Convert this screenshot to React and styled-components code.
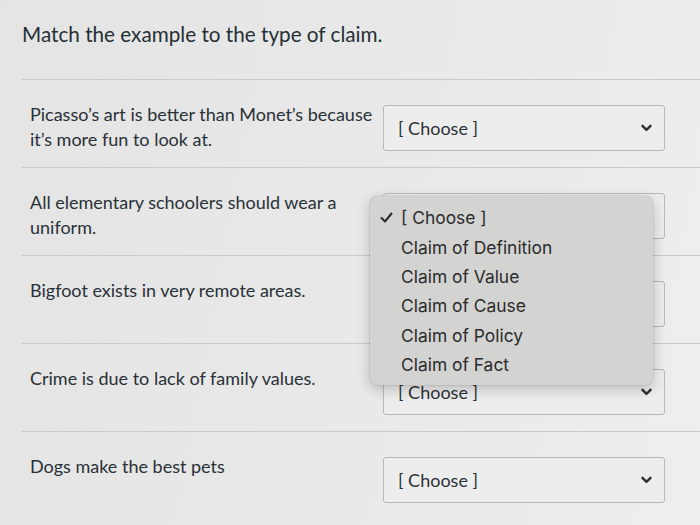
import React from "react";
import styled, { createGlobalStyle } from "styled-components";

const GlobalStyle = createGlobalStyle`
  html, body {
    margin: 0;
    padding: 0;
    background: #e6e7e6;
  }
  body {
    font-family: Lato, "Liberation Sans", sans-serif;
    color: #2d3b45;
  }
`;

const Page = styled.div`
  width: 700px;
  height: 525px;
  overflow: hidden;
  background: linear-gradient(100deg, #e3e4e3 0%, #e8e9e8 55%, #eeeeee 100%);
  padding-left: 22px;
  box-sizing: border-box;
`;

const Header = styled.header`
  height: 80px;
  box-sizing: border-box;
  padding-top: 20px;
  border-bottom: 1px solid #c9cac9;
`;

const Title = styled.h1`
  margin: 0;
  font-size: 20.7px;
  font-weight: 400;
  line-height: 28px;
  color: #262f36;
`;

const Row = styled.div`
  height: 88px;
  box-sizing: border-box;
  padding: 22px 0 0 8px;
  display: flex;
  align-items: flex-start;
  border-bottom: 1px solid ${({ last }) => (last ? "transparent" : "#c9cac9")};
`;

const Prompt = styled.div`
  width: 353px;
  padding-right: 6px;
  box-sizing: border-box;
  font-size: 18px;
  line-height: 25px;
  color: #2a3137;
`;

const SelectWrap = styled.div`
  position: relative;
  margin-top: 3px;
`;

const SelectBox = styled.div`
  width: 282px;
  height: 46px;
  box-sizing: border-box;
  border: 1px solid #b9bab9;
  border-radius: 3px;
  background: #ededed;
  display: flex;
  align-items: center;
  justify-content: space-between;
  padding: 0 12px 0 14px;
  font-size: 18px;
  color: #2a3137;
`;

const Chevron = styled.svg`
  width: 11px;
  height: 8px;
  flex: none;
`;

const Menu = styled.div`
  position: absolute;
  left: -13px;
  top: 3px;
  width: 283px;
  height: 189px;
  box-sizing: border-box;
  padding-top: 7px;
  border-radius: 7px;
  background: #d3d3d2;
  box-shadow: 0 4px 14px rgba(0, 0, 0, 0.22), 0 0 0 0.5px rgba(0, 0, 0, 0.12);
  font-family: Inter, "Open Sans", sans-serif;
  z-index: 2;
`;

const MenuItem = styled.div`
  height: 29.4px;
  display: flex;
  align-items: center;
  padding-left: 10px;
  font-size: 17.4px;
  color: #2b2b2b;
`;

const Check = styled.svg`
  width: 13px;
  height: 11px;
  margin-right: 8px;
  flex: none;
  visibility: ${({ shown }) => (shown ? "visible" : "hidden")};
`;

const options = [
  "[ Choose ]",
  "Claim of Definition",
  "Claim of Value",
  "Claim of Cause",
  "Claim of Policy",
  "Claim of Fact",
];

const rows = [
  "Picasso\u2019s art is better than Monet\u2019s because it\u2019s more fun to look at.",
  "All elementary schoolers should wear a uniform.",
  "Bigfoot exists in very remote areas.",
  "Crime is due to lack of family values.",
  "Dogs make the best pets",
];

const Select = ({ open }) => (
  <SelectWrap>
    <SelectBox>
      <span>[ Choose ]</span>
      <Chevron viewBox="0 0 11 8">
        <polyline
          points="1.5,1.8 5.5,5.8 9.5,1.8"
          fill="none"
          stroke="#2a3137"
          strokeWidth="2.4"
          strokeLinecap="round"
          strokeLinejoin="round"
        />
      </Chevron>
    </SelectBox>
    {open && (
      <Menu>
        {options.map((o, i) => (
          <MenuItem key={o}>
            <Check shown={i === 0} viewBox="0 0 13 11">
              <polyline
                points="1.5,6 5,9.5 11.5,1.5"
                fill="none"
                stroke="#2b2b2b"
                strokeWidth="2"
                strokeLinecap="round"
                strokeLinejoin="round"
              />
            </Check>
            {o}
          </MenuItem>
        ))}
      </Menu>
    )}
  </SelectWrap>
);

const App = () => {
  return (
    <>
      <GlobalStyle />
      <Page>
        <Header>
          <Title>Match the example to the type of claim.</Title>
        </Header>
        {rows.map((text, i) => (
          <Row key={text} last={i === rows.length - 1}>
            <Prompt>{text}</Prompt>
            <Select open={i === 1} />
          </Row>
        ))}
      </Page>
    </>
  );
};

export default App;
